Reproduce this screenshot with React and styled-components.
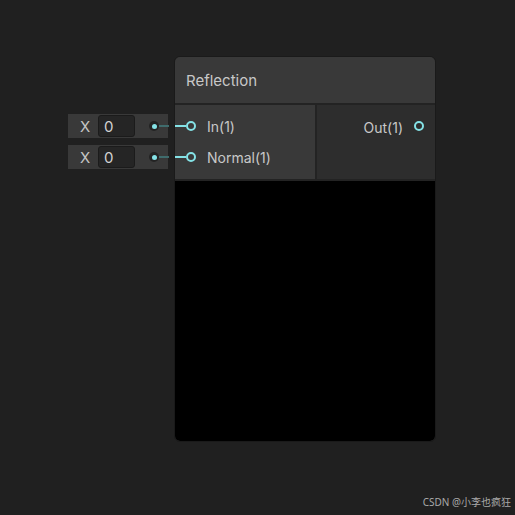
import React from 'react'
import styled, { createGlobalStyle } from 'styled-components'

const Global = createGlobalStyle`
  html, body { margin: 0; padding: 0; background: #202020; }
  * { box-sizing: border-box; }
`

const Canvas = styled.div`
  position: relative;
  width: 515px;
  height: 515px;
  background: #202020;
  font-family: Inter, "Noto Sans", sans-serif;
  overflow: hidden;
`

const GraphNode = styled.div`
  position: absolute;
  left: 68px;
  top: 55px;
  display: flex;
  align-items: flex-start;
`

const FieldColumn = styled.div`
  display: flex;
  flex-direction: column;
  gap: 7px;
  margin-top: 59px;
  width: 100px;
`

const FieldRow = styled.div`
  position: relative;
  height: 24px;
  background: #393939;
  display: flex;
  align-items: center;
  padding-left: 12px;
  color: #c4c4c4;
  font-size: 15px;
`

const Axis = styled.span`
  width: 18px;
`

const NumberBox = styled.div`
  width: 37px;
  height: 22px;
  background: #252525;
  border: 1px solid #1b1b1b;
  border-radius: 3px;
  padding-left: 5px;
  display: flex;
  align-items: center;
  font-size: 15px;
  color: #d2d2d2;
`

const Dot = styled.span`
  position: absolute;
  left: 81px;
  top: 7px;
  width: 10px;
  height: 10px;
  border-radius: 50%;
  background: #232323;
  display: flex;
  align-items: center;
  justify-content: center;
  &::before {
    content: '';
    width: 5px;
    height: 5px;
    border-radius: 50%;
    background: #84e2e6;
  }
  &::after {
    content: '';
    position: absolute;
    left: 10px;
    top: 4px;
    width: 10px;
    height: 2px;
    background: #3f6c6d;
  }
`

const Node = styled.div`
  width: 262px;
  margin-left: 6px;
  margin-top: 1px;
  border: 1px solid #1a1a1a;
  border-radius: 6px;
  background: #232323;
  overflow: hidden;
`

const Header = styled.div`
  height: 48px;
  background: #393939;
  border-bottom: 2px solid #232323;
  display: flex;
  align-items: center;
  padding-left: 11px;
  font-size: 15px;
  color: #c8c8c8;
`

const Body = styled.div`
  display: flex;
  border-bottom: 2px solid #232323;
`

const Inputs = styled.div`
  width: 142px;
  background: #393939;
  padding: 6px 0 6px;
  border-right: 2px solid #232323;
`

const Outputs = styled.div`
  flex: 1;
  background: #2d2d2d;
  padding: 6px 0 6px;
`

const PortRow = styled.div`
  height: 31px;
  display: flex;
  align-items: center;
  justify-content: ${p => (p.$out ? 'flex-end' : 'flex-start')};
  padding: ${p => (p.$out ? '0 11px 0 0' : '0 0 0 11px')};
  gap: 11px;
  font-size: 14px;
  color: #c8c8c8;
  position: relative;
  top: ${p => (p.$out ? '1px' : '0')};
`

const Port = styled.span`
  position: relative;
  width: 10px;
  height: 10px;
  border-radius: 50%;
  border: 2px solid #84e2e6;
  top: ${p => (p.$out ? '-2px' : '-1px')};
  flex-shrink: 0;
  ${p =>
    p.$wired &&
    `&::before {
      content: '';
      position: absolute;
      right: 8px;
      top: 2px;
      width: 17px;
      height: 2px;
      background: #84e2e6;
    }`}
`

const Label = styled.span`
  line-height: 1;
`

const Preview = styled.div`
  height: 260px;
  background: #000;
  border-radius: 0 0 5px 5px;
`

const Watermark = styled.div`
  position: absolute;
  right: 4px;
  bottom: 6px;
  font-family: "Noto Sans", "Noto Sans CJK SC", sans-serif;
  font-size: 10px;
  color: #a9a9a9;
`

const fields = ['In(1)', 'Normal(1)']

export default function App() {
  return (
    <Canvas>
      <Global />
      <GraphNode>
        <FieldColumn>
          {fields.map(f => (
            <FieldRow key={f}>
              <Axis>X</Axis>
              <NumberBox>0</NumberBox>
              <Dot />
            </FieldRow>
          ))}
        </FieldColumn>
        <Node>
          <Header>Reflection</Header>
          <Body>
            <Inputs>
              {fields.map(f => (
                <PortRow key={f}>
                  <Port $wired />
                  <Label>{f}</Label>
                </PortRow>
              ))}
            </Inputs>
            <Outputs>
              <PortRow $out>
                <Label>Out(1)</Label>
                <Port $out />
              </PortRow>
            </Outputs>
          </Body>
          <Preview />
        </Node>
      </GraphNode>
      <Watermark>CSDN @小李也疯狂</Watermark>
    </Canvas>
  )
}
